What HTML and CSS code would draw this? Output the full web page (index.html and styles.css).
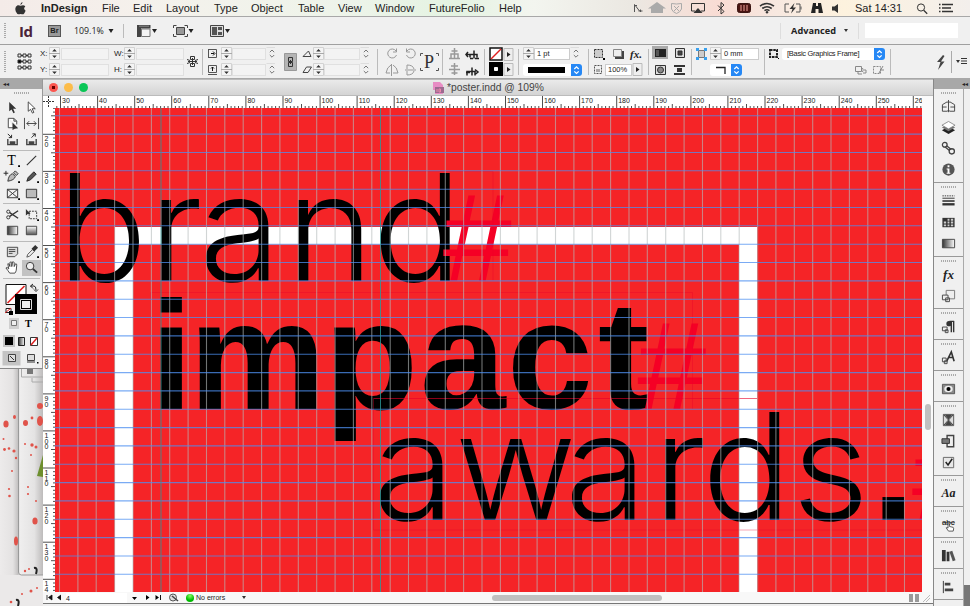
FILE: index.html
```html
<!DOCTYPE html>
<html lang="en">
<head>
  <meta charset="UTF-8">
  <title>poster.indd</title>
  <link rel="stylesheet" href="styles.css">
</head>
<body>

<svg class="sprites" width="0" height="0">
  <symbol id="stepper" viewBox="0 0 11 13"><path d="M.5.5h10v12H.5z" fill="#f4f4f4" stroke="#d2d2d2"/><path d="M0 6.5h11" stroke="#aaa"/><path d="M3.2 4.6 5.5 2l2.3 2.6zM3.2 8.4 5.5 11l2.3-2.6z" fill="#333"/></symbol>
  <symbol id="updown" viewBox="0 0 12 13"><path d="M.5.5H9q2.500 2.500 2.500V10q0 2.500-2.500 2.500H.5z" fill="#fafafa" stroke="#ddd"/><path d="M3.800 5.200 6 3l2.200 2.200M3.800 8 6 10.200 8.200 8" fill="none" stroke="#777"/></symbol>
  <symbol id="blue" viewBox="0 0 11 12"><path d="M0 0h8q3 0 3 3v6q0 3-3 3H0z" fill="#2688f5"/><path d="M3.300 5 5.500 2.800 7.700 5M3.300 7.300l2.200 2.200 2.200-2.200" fill="none" stroke="#fff" stroke-width="1.200"/></symbol>
  <symbol id="next" viewBox="0 0 10 13"><path d="M.5.5h9v12h-9z" fill="#eee" stroke="#bbb"/><path d="M3.500 4v5L7 6.500z" fill="#222"/></symbol>
</svg>

<nav class="menubar">
  <div class="menu-apple"><svg width="11" height="13" viewBox="0 0 11 13"><path d="M7.500 0Q7.600 2 5.500 2.900 5.300 1 7.500 0zM5.600 3.700Q9 2.300 10.300 4.500 7.800 6.500 10.600 8.700 9 13 7 12.200q-1.400-.6-2.600 0Q2.300 13 .8 9.500-.8 4.900 2.600 3.300q1.200-.3 3 .4z" fill="#333"/></svg></div>
  <div class="menu-item m-app">InDesign</div>
  <div class="menu-item m-file">File</div>
  <div class="menu-item m-edit">Edit</div>
  <div class="menu-item m-layout">Layout</div>
  <div class="menu-item m-type">Type</div>
  <div class="menu-item m-object">Object</div>
  <div class="menu-item m-table">Table</div>
  <div class="menu-item m-view">View</div>
  <div class="menu-item m-window">Window</div>
  <div class="menu-item m-folio">FutureFolio</div>
  <div class="menu-item m-help">Help</div>
  <div class="menu-status">
    <svg width="223" height="16" viewBox="630 0 223 16" fill="none" stroke="#333">
      <path d="M634.500 12V4.500l5 6.500M637 5.500h-2.500m6 4v2.500m-2-1h4" stroke="#555"/>
      <path d="m648 8.500 9-6.500 9 6.500h-3V13h-12V8.500z" fill="#aaa" stroke="none"/>
      <path d="M671.500 3.500q5 1 10 0V9q-1 3-5 4.500-4-1.500-5-4.500zM674 6l5 5m0-5-5 5" stroke="#aaa"/>
      <path d="M695 11h-3.500V3.500h13V11H701"/><path d="m693.500 13 4.500-5 4.500 5z" fill="#333" stroke="none"/>
      <path d="m718 5.500 6 6-3 2.500V2.500l3 2.500-6 6"/>
      <rect x="737.500" y="3.500" width="13" height="9" rx="2" fill="#4a1512" stroke="#3a1512"/><path d="M741 5v6m3-6v6m3-6v6" stroke="#f3a39a"/>
      <path d="M760 6.200q7-5.500 14 0M762.300 8.500q4.700-3.500 9.400 0M764.500 10.700q2.500-1.800 5 0" stroke-width="1.600"/><circle cx="767" cy="12.300" r="1.200" fill="#333" stroke="none"/>
      <path d="M789 4h-4v8h4m7-8h4v8h-4m5-5.500v3" stroke="#555"/><path d="m794.500 3-5 6h3l-1.500 4.500 5-6h-3z" fill="#333" stroke="none"/>
      <path d="M813 3h3v3h2V3h3l2 10h-4.500V9h-3v4H811z" fill="#222" stroke="none"/>
      <path d="M832 6.500h2.500L838 4v9l-3.500-2.500H832z" fill="#333" stroke="none"/>
    </svg>
    <span class="clock">Sat 14:31</span>
    <svg width="60" height="16" viewBox="910 0 60 16" fill="none" stroke="#333">
      <circle cx="921" cy="7.500" r="3.600"/><path d="m923.700 10.300 3.500 3.500" stroke-width="1.300"/>
      <path d="M942 4.500h11m-11 3.500h9m-9 3.500h11" stroke-width="1.500"/><path d="M939 4.500h1.500M939 8h1.500m-1.500 3.500h1.500" stroke-width="1.500"/>
    </svg>
  </div>
</nav>

<header class="appbar">
  <span class="grip"></span>
  <span class="id-logo">Id</span>
  <span class="bridge">Br</span>
  <span class="zoom-level">109.1%</span>
  <svg class="view-tools" width="130" height="20" viewBox="103 21 130 20">
    <path d="m108.500 29 2.500 4 2.500-4zM152 29l2.500 4 2.500-4zM188.500 29l2.500 4 2.500-4zM225 29l2.500 4 2.500-4z" fill="#222"/>
    <path d="M123.500 24v14" stroke="#bbb"/>
    <path d="M137 25h13.500v3.500H141V37h-4z" fill="#444"/><path d="M141.500 29h8.500v7.500h-8.500z" fill="#f4f4f4" stroke="#777"/><path d="M140 25.500v1.500m2-1.500v1.500m2-1.500v1.500m2-1.500v1.500m2-1.500v1.500" stroke="#ccc" stroke-width=".7"/>
    <path d="M176.500 27.500h8v7h-8z" fill="#999" stroke="#444"/><path d="M173.500 28v-2.500h3m8 0h3V28m0 6v2.500h-3m-8 0h-3V34" fill="none" stroke="#444"/>
    <path d="M210.500 25.500h13v11h-13z" fill="#ddd" stroke="#444"/><path d="M212 27h5v8h-5zm6 0h4v3h-4zm0 5h4v3h-4z" fill="#555"/>
  </svg>
  <div class="workspace-switch">Advanced <i class="caret"></i></div>
  <div class="search-field"></div>
</header>

<section class="controlbar">
  <div class="group g-ref">
    <span class="grip"></span>
    <svg width="16" height="17" viewBox="0 0 16 17" fill="none" stroke="#333"><path d="M3 2.500h9M3 8.500h9M3 14.500h9" /><path d="M1 1h3v3H1zm5 0h3v3H6zm5 0h3v3h-3zM6 7h3v3H6zm5 0h3v3h-3zM1 13h3v3H1zm5 0h3v3H6zm5 0h3v3h-3z" fill="#f0f0f0"/><path d="M1 7h3v3H1z" fill="#000"/></svg>
  </div>
  <div class="group g-pos">
    <div class="row"><b class="lbl">X:</b><svg class="st"><use href="#stepper"/></svg><i class="field"></i></div>
    <div class="row"><b class="lbl">Y:</b><svg class="st"><use href="#stepper"/></svg><i class="field"></i></div>
  </div>
  <div class="group g-size">
    <div class="row"><b class="lbl">W:</b><svg class="st"><use href="#stepper"/></svg><i class="field"></i></div>
    <div class="row"><b class="lbl">H:</b><svg class="st"><use href="#stepper"/></svg><i class="field"></i></div>
  </div>
  <div class="group g-chain">
    <svg width="11" height="13" viewBox="0 0 11 13" fill="none" stroke="#333"><path d="M3.500 1.500h4v3h-4zm0 7h4v3h-4zM5.500 3v7M0 4.500l3 1m8-1-3 1M0 8.500l3-1m8 1-3-1M1 6.500h9"/></svg>
  </div>
  <div class="group g-scale line">
    <div class="row"><svg class="ic" viewBox="0 0 11 13" fill="none" stroke="#555"><path d="M1.500 2v9m0-8.500h8v8h-8"/><path d="M4 6.500h3M6 4.500l2 2-2 2" stroke="#111"/></svg><svg class="st"><use href="#stepper"/></svg><i class="field"></i><svg class="ud"><use href="#updown"/></svg></div>
    <div class="row"><svg class="ic" viewBox="0 0 11 13" fill="none" stroke="#555"><path d="M1 11.500h9m-8.500-9h8v7h-8z"/><path d="M5.500 8V4M4 5.500 5.500 4 7 5.500" stroke="#111"/></svg><svg class="st"><use href="#stepper"/></svg><i class="field"></i><svg class="ud"><use href="#updown"/></svg></div>
  </div>
  <div class="group g-link">
    <svg width="13" height="18" viewBox="0 0 13 18"><path d="M.5.5h12v17H.5z" fill="#b4b4b4" stroke="#999"/><path d="M4.500 4.500h4v4h-4zm0 5h4v4h-4zM6.500 7v4" fill="none" stroke="#333"/></svg>
  </div>
  <div class="group g-angle">
    <div class="row"><svg class="ic" viewBox="0 0 11 13" fill="none" stroke="#444"><path d="M1 9.500h8L6.500 4z"/></svg><svg class="st"><use href="#stepper"/></svg><i class="field"></i><svg class="ud"><use href="#updown"/></svg></div>
    <div class="row"><svg class="ic" viewBox="0 0 11 13" fill="none" stroke="#444"><path d="M1 9.500h5L9.500 4h-5z"/></svg><svg class="st"><use href="#stepper"/></svg><i class="field"></i><svg class="ud"><use href="#updown"/></svg></div>
  </div>
  <div class="group g-rotate line">
    <svg width="34" height="30" viewBox="380 47 34 30" fill="none" stroke="#999"><path d="M394 51a4.500 4.500 0 1 0 .5 4M394.500 48.500V52H391M405 51a4.500 4.500 0 1 1-.5 4M404.500 48.500V52h3.500"/><path d="M389.500 64v12M388 73h-4q1-6 5-8m2 8h5q-1-6-5-8M403 70h12M405 65q6 0 7 4m-7 6q6 0 7-4M405 65v4m0 6v-4"/></svg>
    <svg width="22" height="22" viewBox="0 0 22 22"><path d="M1.500 5V2.500H4m13 0h2.500V5m0 12v2.500H17m-13 0H1.500V17" fill="none" stroke="#555"/><text x="5" y="17" class="flip-p">P</text></svg>
  </div>
  <div class="group g-select line">
    <svg width="35" height="30" viewBox="447 47 35 30" fill="none" stroke="#999"><path d="M454.500 48v11M449 58.500h11M451 58v-4h7v4M451.500 51h6M454.500 63v12M449 69.500h11M451 66h7M451.500 73h6" stroke-width="1.500"/><path d="M466 54.500h5m-3-2.500-2 2.500 2 2.500m6-6.500v8m-4 0h3m2 0h4m-9-1v-3h7v3M466 72.500h4m2-5v8m-5 0v-4h8v4m0-6 3 2.500-3 2.500" stroke="#222" stroke-width="1.500"/></svg>
  </div>
  <div class="group g-fill line">
    <div class="row"><svg width="14" height="14" viewBox="0 0 14 14"><path d="M1 1h12v12H1z" fill="#fff" stroke="#111" stroke-width="1.500"/><path d="M2 12 12 2" stroke="#e02020" stroke-width="1.500"/></svg><svg class="nx"><use href="#next"/></svg></div>
    <div class="row"><svg width="14" height="14" viewBox="0 0 14 14"><path d="M0 0h14v14H0z"/><path d="M5.500 5.500h3v3h-3z" fill="#fff" stroke="#fff"/></svg><svg class="nx"><use href="#next"/></svg></div>
  </div>
  <div class="group g-stroke line">
    <div class="row"><svg class="st"><use href="#stepper"/></svg><span class="field on">1 pt</span><svg class="ud"><use href="#updown"/></svg></div>
    <div class="row"><div class="stroke-style"><i></i><svg width="11" height="12"><use href="#blue"/></svg></div></div>
  </div>
  <div class="group g-effects line">
    <div class="row"><svg width="33" height="14" viewBox="0 0 33 14"><path d="M1.500 2.500h8v8h-8z" fill="#ccc" stroke="#333" stroke-dasharray="2 1"/><path d="M10 11h2v2h-2z"/><path d="M22 4h9v8h-9z" fill="#444"/><path d="M20.500 2.500h8v7h-8z" fill="#eee" stroke="#888"/></svg><em class="fx">fx.</em></div>
    <div class="row"><svg class="ic" viewBox="0 0 11 13" fill="none" stroke="#555"><path d="M1.500 2.500h7v8h-7z" stroke-dasharray="2 1"/><path d="M3 6h4v3H3z" fill="#aaa" stroke="none"/></svg><span class="field on pct">100%</span><svg class="nx"><use href="#next"/></svg></div>
  </div>
  <div class="group g-wrap line">
    <svg width="38" height="32" viewBox="651 46 38 32"><path d="M652 46h16v13h-16z" fill="#aaa"/><path d="M655 49h11v8h-11z" fill="#222"/><path d="M656 51h3m-3 2h3m-3 2h3" stroke="#888"/><g fill="#ddd" stroke="#333"><path d="M675.500 48.500h9v9h-9zM655.500 65.500h10v9h-10z"/><path d="M678 51h4v4h-4z" fill="#444"/><circle cx="660.500" cy="70" r="3" fill="#888"/></g><path d="M674 65h11v2h-11zm3 3h5v4h-5zm-3 5h11v2h-11z" fill="#333"/></svg>
  </div>
  <div class="group g-corner line">
    <div class="row"><svg class="ic" viewBox="0 0 11 13"><path d="M2.500 3.500h6v7h-6z" fill="#ccc" stroke="#777"/><path d="M0 1h3v3H0zm8 0h3v3H8zM0 10h3v3H0zm8 0h3v3H8z" fill="#38a0ee"/></svg><svg class="st"><use href="#stepper"/></svg><span class="field on">0 mm</span></div>
    <div class="row"><div class="corner-style"><svg width="21" height="12" viewBox="0 0 21 12"><path d="M6 3.500h9V10" fill="none" stroke="#222" stroke-width="1.300"/></svg><svg width="11" height="12"><use href="#blue"/></svg></div></div>
  </div>
  <div class="group g-style line">
    <div class="row"><svg class="ic" viewBox="0 0 11 13"><path d="M2 3h7v7H2z" fill="#eee" stroke="#222" stroke-width="2" stroke-dasharray="2.500 .8"/><path d="M10 11h1v1h-1z"/></svg><div class="style-select"><span>[Basic Graphics Frame]</span><svg width="11" height="12"><use href="#blue"/></svg></div></div>
    <div class="row row-end"><svg width="31" height="12" viewBox="0 0 31 12" fill="none" stroke="#888"><path d="M1.500 2.500h6v5h-6zM4 8v2h4m1-4h3v3H9m0-5L7.500 6 9 8"/><path d="M19.500 2.500h7v7h-7z" stroke-dasharray="2 1"/><path d="m25 9 4-7m-2 4h3"/></svg></div>
  </div>
  <div class="group g-end line">
    <svg width="36" height="22" viewBox="934 51 36 22"><path d="m943 55-6 7h3.500l-2.500 8 6.500-8.500H941l3.500-5.500z" fill="#444"/><path d="M951.500 51v22" stroke="#aaa"/><path d="m956 60 2 3 2-3z" fill="#333"/><path d="M961 58.500h6m-6 2.500h6m-6 2.500h6" stroke="#333"/></svg>
  </div>
</section>

<main class="workspace">

  <aside class="left">
    <div class="toolbox">
      <div class="panel-head head-left">◂◂</div>
      <div class="tool-grip"></div>
      <div class="tool-group">
        <svg viewBox="0 0 16 16"><path d="M4.500 2v10l2.500-2 2 4 1.500-.8L8.700 9.300H12z" fill="#333"/></svg>
        <svg viewBox="0 0 16 16"><path d="M4.500 2v10l2.500-2 2 4 1.500-.8L8.700 9.300H12z" fill="#fff" stroke="#333" stroke-width=".9"/></svg>
        <svg viewBox="0 0 16 16" fill="none" stroke="#444"><path d="M3.500 2.500h6l3 3V9m-4 3.500h-5v-10m6 0v3h3" fill="#fff"/><path d="m8 7 6 6-3.500.5L8 15z" fill="#333" stroke="none"/></svg>
        <svg viewBox="0 0 16 16" fill="none" stroke="#444"><path d="M.5 2v12m15-12v12M3 8h10M5.500 5.500 3 8l2.500 2.500m5-5L13 8l-2.500 2.500"/></svg>
        <svg viewBox="0 0 16 16" fill="none" stroke="#444"><path d="M3 7.500v6h10v-6M5 10.500h6M5 12h6" stroke-width="1.500"/><path d="m3 2 4 4m0-3v3H4" stroke="#222"/></svg>
        <svg viewBox="0 0 16 16" fill="none" stroke="#444"><path d="M3 7.500v6h10v-6M5 10.500h6M5 12h6" stroke-width="1.500"/><path d="m8 6 4-4m0 3V2H9" stroke="#222"/></svg>
      </div>
      <div class="tool-group">
        <svg viewBox="0 0 16 16"><text x="2.500" y="13" class="tool-t">T</text><path d="M14 13h2v2h-2z"/></svg>
        <svg viewBox="0 0 16 16"><path d="m3 13 10-10" stroke="#333" stroke-width="1.200"/></svg>
        <svg viewBox="0 0 16 16"><path d="M1 2v5m-2.500-2.500h5" stroke="#222"/><path d="M3 13q1-7 5-8l3 3q-1 4-8 5zm6-9 2-2 3 3-2 2z" fill="#bbb" stroke="#333"/><path d="M14 13h2v2h-2z"/></svg>
        <svg viewBox="0 0 16 16"><path d="m3 13 1.500-4 6-6 2.500 2.500-6 6z" fill="#555" stroke="#222"/><path d="M14 13h2v2h-2z"/></svg>
        <svg viewBox="0 0 16 16" fill="none" stroke="#333"><path d="M2.500 3.500h11v9h-11zl11 9m0-9-11 9"/><path d="M14 13h2v2h-2z" fill="#000" stroke="none"/></svg>
        <svg viewBox="0 0 16 16"><path d="M2.500 3.500h11v9h-11z" fill="#bbb" stroke="#333"/><path d="M14 13h2v2h-2z"/></svg>
      </div>
      <div class="tool-group">
        <svg viewBox="0 0 16 16" fill="none" stroke="#333"><path d="m14 4-9 6m9 2L5 6" stroke-width="1.400"/><circle cx="3.500" cy="5" r="1.700"/><circle cx="3.500" cy="11" r="1.700"/></svg>
        <svg viewBox="0 0 16 16"><path d="M2 2v7l2-1.500 3 0z" fill="#333"/><path d="M5.500 4.500h8v8h-8z" fill="none" stroke="#333" stroke-dasharray="2 1"/><path d="M14 13h2v2h-2z"/></svg>
        <svg viewBox="0 0 16 16"><defs><linearGradient id="g1"><stop stop-color="#333"/><stop offset="1" stop-color="#fff"/></linearGradient></defs><path d="M2.500 3.500h11v9h-11z" fill="url(#g1)" stroke="#444"/></svg>
        <svg viewBox="0 0 16 16"><defs><linearGradient id="g2" y2="1" x2="0"><stop stop-color="#fff"/><stop offset="1" stop-color="#555"/></linearGradient></defs><path d="M2.500 3.500h11v9h-11z" fill="url(#g2)" stroke="#444"/></svg>
      </div>
      <div class="tool-group">
        <svg viewBox="0 0 16 16" fill="none" stroke="#444"><path d="M2.500 3.500h11v7l-3 3h-8z" fill="#ddd"/><path d="M4 6h7M4 8h7m-7 2h4"/></svg>
        <svg viewBox="0 0 16 16"><path d="m3 14 1-3 5-5 2 2-5 5z" fill="#eee" stroke="#555"/><path d="m8 5 4-4 3 3-4 4z" fill="#333"/><path d="M14 13h2v2h-2z"/></svg>
        <svg viewBox="0 0 16 16"><path d="M5 14Q3 11 1 8.500q1-1.500 3 1L3 4q1.500-1 2.200 3V2.500q1.500-1 2 0V7l.8-5q1.500-.5 1.800 1v4l1.500-3q1.500 0 1.200 1.500L12 11q-.5 2-1.500 3z" fill="#fff" stroke="#333" stroke-width=".9"/></svg>
        <div class="tool-active"><svg viewBox="0 0 16 16"><circle cx="6.500" cy="6.500" r="4" fill="#eee" stroke="#333"/><path d="m9.500 9.500 4.500 4" stroke="#333" stroke-width="2"/></svg></div>
      </div>
      <svg class="swatches" width="42" height="87" viewBox="0 281 42 87">
        <path d="M6 284.500h20v20H6z" fill="#fff" stroke="#111"/><path d="m7.500 303 17-17" stroke="#e02020" stroke-width="1.600"/>
        <path d="M15 294h22v20H15z"/><path d="M20.500 299.500h11v10h-11z" fill="none" stroke="#ddd"/><path d="M22 301h8v7h-8z" fill="#eee"/>
        <path d="M30.500 286h3.500q2 0 2 4M33 284l-2.500 2 2.500 2.500m1 1 2 2 2-2" fill="none" stroke="#222"/>
        <path d="M6 308.500h5v4H6z" fill="#fff" stroke="#222"/><path d="M9 311h4v4H9z"/><path d="m5 313 6-5" stroke="#d22"/>
        <path d="M9 318h10v11H9z" fill="#d0d0d0"/><path d="M11.500 320.500h5v5h-5z" fill="#eee" stroke="#777"/>
        <path d="M3 335h12v12H3z" fill="#c4c4c4"/><path d="M5 337h8v8H5z"/>
        <path d="M18.500 337.500h6v8h-6z" fill="url(#g1)" stroke="#222"/><path d="M30.500 337.500h7v8h-7z" fill="#fff" stroke="#333"/><path d="m31 345 6-7" stroke="#d22" stroke-width="1.500"/>
        <path d="M2.500 351h18v14.500h-18z" fill="#c4c4c4"/><path d="M8.500 354.500h7v7h-7zM27.500 354.500h7v6h-7z" fill="#ddd" stroke="#444"/><path d="m10 356 4 4M27 362h8" stroke="#333"/><path d="M37 362h1.500v1.500H37z"/>
        <text x="25" y="327" class="swatch-t">T</text>
      </svg>
    </div>
    <svg class="desktop" width="43" height="237" viewBox="0 369 43 237">
      <defs><linearGradient id="shade"><stop stop-color="#edebeb"/><stop offset=".3" stop-color="#e4e2e2"/><stop offset=".42" stop-color="#c2c0c0"/><stop offset=".46" stop-color="#efeeee"/><stop offset=".8" stop-color="#e4e3e3"/><stop offset="1" stop-color="#bdbbbb"/></linearGradient></defs>
      <path d="M0 369h43v237H0z" fill="#ebe9e9"/>
      <path d="M0 369h43v206H0z" fill="url(#shade)"/>
      <path d="M18.500 369v203q0 3 3 3H43" fill="none" stroke="#999"/>
      <path d="M21.500 369v8H43M32 378v4h11" fill="none" stroke="#aaa"/>
      <path d="M27 369h6v5h-6z" fill="#777"/>
      <path d="M43 455v22l-6-1z" fill="#6d8f2e"/>
      <g fill="#e0534a"><ellipse cx="6" cy="424" rx="2.600" ry="3.500"/><ellipse cx="14.500" cy="417" rx="1.500" ry="2"/><ellipse cx="25.500" cy="423" rx="2.500" ry="3"/><ellipse cx="40" cy="421" rx="3" ry="5"/><ellipse cx="40" cy="406" rx="3" ry="3"/><circle cx="32" cy="418" r="1.400"/><circle cx="3.500" cy="439" r="1"/><circle cx="4.500" cy="449.500" r="1.400"/><circle cx="9" cy="448.500" r="1.300"/><circle cx="14" cy="451" r="1.600"/><circle cx="16" cy="458" r="1.200"/><circle cx="25" cy="444" r="1"/><circle cx="32" cy="445" r="1.700"/><circle cx="36" cy="447" r="1.500"/><circle cx="31" cy="455" r="1"/><circle cx="12" cy="471" r="1"/><circle cx="9" cy="489" r="1.100"/><circle cx="9.500" cy="496" r="1.300"/><circle cx="28" cy="487" r="1"/><circle cx="28" cy="494" r="1.100"/><circle cx="36" cy="501" r="1"/><ellipse cx="35" cy="521" rx="2.600" ry="3.600"/><ellipse cx="16" cy="541" rx="2" ry="4.500"/><circle cx="25" cy="571" r="1.200"/><circle cx="29" cy="569" r="1"/><circle cx="31" cy="591" r="1.500"/><circle cx="22" cy="594" r="1"/><circle cx="11" cy="602" r="1.300"/><circle cx="37" cy="588" r="1"/></g>
      <path d="M34 568q4-1 2 6M16 600q4-1 2 6" fill="none" stroke="#222" stroke-width="2"/>
    </svg>
  </aside>

  <section class="document">
    <div class="titlebar">
      <span class="dot close"></span><span class="dot mini"></span><span class="dot full"></span>
      <div class="doc-title">
        <svg width="12" height="12" viewBox="0 0 12 12"><path d="M1 0h7l3 3v9H3V8H1z" fill="#e88cc4"/><path d="M3 5h9v6H3z" fill="#9c6a90"/><path d="M5 7v3m2-3h1.500v3H7z" stroke="#e8a" fill="none"/></svg>
        *poster.indd @ 109%
      </div>
    </div>
    <div class="page-area">
      <svg class="corner" width="12" height="12" viewBox="0 0 12 12"><path d="M0 0h12v12H0z" fill="#fff"/><path d="M5.500 0v12M0 5.500h12" stroke="#333" stroke-dasharray="2 1"/></svg>
      <svg class="ruler-x" width="867" height="12" viewBox="55 96 867 12"></svg>
      <div class="scroll-y-top"></div>
      <svg class="ruler-y" width="12" height="484" viewBox="43 108 12 484"></svg>
      <svg class="artboard" width="867" height="484" viewBox="55 108 867 484">
        <path class="page" d="M55 108h867v484H55z"/>
        <path class="white-frame" d="M115 592V227h642v365h-18V244.500H133V592z"/>
        <g class="light">
          <text y="280.500" x="57.500 149 199 286 372.500">brand</text>
          <text y="519.500" x="373 455 565 653 702 792">awards</text>
        </g>
        <g class="heavy">
          <text y="409" x="150 189 324 420 507 598">impact</text>
          <text y="519.500" x="872">.</text>
        </g>
        <g class="end-mark">
          <text y="280.500" x="441">#</text>
          <text y="408.500" x="635.500">#</text>
          <text y="519.500" x="910">#</text>
        </g>
        <path class="text-frames" d="M55 171.500h438v109M150.500 409V292.500h542V409M373.500 530V398.500M373.500 530H922"/>
        <path class="text-frames strong" d="M373.500 398.500H757"/>
        <g class="grid-lines"></g>
        <path class="guides" d="M161 108v484M380.500 108v484"/>
      </svg>
      <div class="scroll-y"><i></i></div>
    </div>
    <div class="statusbar">
      <svg width="16" height="11" viewBox="0 0 16 11"><path d="M2 3v5M7 3v5L3.500 5.500zM16 3v5l-3.500-2.500z" fill="#111" stroke="#111" stroke-width=".8"/></svg>
      <span class="page-no">4</span>
      <svg class="pager" width="54" height="11" viewBox="127 593 54 11"><path d="m131 598 2.500 3 2.500-3zM145 596v5l3.500-2.500zM154.500 596v5l3.500-2.500z"/><path d="M159.500 596v5" stroke="#111"/><circle cx="172" cy="598.500" r="3.500" fill="#ddd" stroke="#555"/><path d="m171 597 6 5" stroke="#444" stroke-width="1.500"/></svg>
      <span class="ok"></span>
      <span class="preflight">No errors</span>
      <i class="caret"></i>
      <div class="scroll-x"><i></i></div>
      <svg class="split" width="23" height="11" viewBox="0 0 23 11"><path d="M1 2h4v8H1zm6 0h4v8H7z" fill="#999"/><path d="m15 10 7-7m-4 7 4-4" stroke="#bbb"/></svg>
    </div>
  </section>

  <aside class="dock">
    <div class="panel-head head-right">◂◂</div>
    <div class="dock-body">
      <div class="dock-icons">
        <div class="dock-section">
          <svg viewBox="0 0 16 16" fill="none" stroke="#444"><path d="M1.500 13V6l5-3 1.500 1 1.500-1 5 3v7h-5L8 12l-1.500 1zM8 1v13M1 8.500h5m4 0h5"/></svg>
          <svg viewBox="0 0 16 16"><path d="m1 11 7-4 7 4-7 4z" fill="#222"/><path d="m1 8 7-4 7 4-7 4z" fill="#777"/><path d="m1 5.500 7-4 7 4-7 4z" fill="#fff" stroke="#777" stroke-width=".8"/></svg>
          <svg viewBox="0 0 16 16" fill="none" stroke="#444" stroke-width="1.400"><circle cx="4" cy="4" r="2.500"/><circle cx="11.500" cy="11" r="2.800"/><path d="m6 5 5 4m-7-3 5 4"/></svg>
          <svg viewBox="0 0 16 16"><circle cx="8" cy="8" r="6.500" fill="#555"/><path d="M7 3.500h2v2H7zM6 7h3v4.500h1v1H6v-1h1V8H6z" fill="#fff"/></svg>
        </div>
        <div class="dock-section">
          <svg viewBox="0 0 16 16" stroke="#333"><path d="M1.500 3h13" stroke-dasharray="1.500 1"/><path d="M1.500 5.500h13"/><path d="M1.500 8.500h13" stroke-width="1.700"/><path d="M1.500 12h13" stroke-width="2.500"/></svg>
          <svg viewBox="0 0 16 16"><path d="M1.500 3h13v10h-13z" fill="#333"/><path d="M3 7h2.500v2H3zm4 0h2v2H7zm3.500 0H13v2h-2.500zM3 10h2.500v2H3zm4 0h2v2H7zm3.500 0H13v2h-2.500zM7 4h2v2H7zm3.500 0H13v2h-2.500z" fill="#ccc"/></svg>
          <svg viewBox="0 0 16 16"><path d="M1.500 3.500h13v9h-13z" fill="url(#g1)" stroke="#444"/></svg>
        </div>
        <div class="dock-section">
          <em class="dock-fx">fx</em>
          <svg viewBox="0 0 16 16" fill="#eee" stroke="#444"><path d="M5.500 2.500h9v9h-9z" stroke="#777"/><path d="M1.500 7.500h6v5h-6zM5 10.500h4v4H5z"/></svg>
        </div>
        <div class="dock-section">
          <svg viewBox="0 0 16 16"><path d="M13.500 2v12M11 2v12M14 2.500H9" stroke="#333" stroke-width="1.500"/><circle cx="8.500" cy="5" r="2.800" fill="#333"/><path d="M1.500 8.500h5v4h-5zm3 3h3v3h-3z" fill="#eee" stroke="#444"/></svg>
        </div>
        <div class="dock-section">
          <svg viewBox="0 0 16 16"><path d="m6 12 5-10 3 10M8 8h5" fill="none" stroke="#333" stroke-width="1.700"/><path d="M1.500 8.500h4v4h-4zm2 3h3v3h-3z" fill="#eee" stroke="#444"/></svg>
        </div>
        <div class="dock-section">
          <svg viewBox="0 0 16 16"><path d="M1.500 3.500h13v10h-13z" fill="#888" stroke="#555"/><ellipse cx="8" cy="8.500" rx="4.500" ry="3.500" fill="#eee"/><circle cx="8" cy="8.500" r="2.200"/></svg>
        </div>
        <div class="dock-section">
          <svg viewBox="0 0 16 16"><path d="M2.500 2.500h11v12h-11z" fill="#ddd" stroke="#555"/><path d="m3 3 10 11M13 3 3 14" stroke="#333"/><path d="m4 14 4-5 4 5zm0-11h8L8 8z" fill="#444"/></svg>
          <svg viewBox="0 0 16 16"><path d="M6.500 1.500h7v12h-7z" fill="#eee" stroke="#444" stroke-width="1.500"/><path d="M1 5h8v5H1z" fill="#777" stroke="#333"/></svg>
          <svg viewBox="0 0 16 16" fill="none" stroke="#666"><path d="M2.500 2.500h11v11h-11z" fill="#e8e8e8"/><path d="m5 7.500 2.500 3L12 4" stroke="#222" stroke-width="1.600"/></svg>
        </div>
        <div class="dock-section"><em class="dock-aa">Aa</em></div>
        <div class="dock-section">
          <svg viewBox="0 0 16 16"><text x="1" y="8" class="dock-abc">abc</text><path d="M1 6h14" stroke="#333" stroke-width=".8"/><path d="M8 15 5.500 11.500q1-1 2 .3V7.500q1-.8 1.500 0V10l4 1q1 1 0 4z" fill="#fff" stroke="#333" stroke-width=".8"/></svg>
        </div>
        <div class="dock-section">
          <svg viewBox="0 0 16 16"><path d="M1 2h4v12H1zm5 2h3v10H6z" fill="#333"/><path d="m9 4 3-1 3.500 10-3 1z" fill="#555"/></svg>
        </div>
        <div class="dock-section">
          <svg viewBox="0 0 16 16"><path d="M2.500 2v13" stroke="#333"/><path d="M4 4h6v3H4zm0 6h9v3H4z" fill="#444"/></svg>
        </div>
      </div>
      <div class="dock-edge"></div>
    </div>
  </aside>

</main>

<script>
  const NS = 'http://www.w3.org/2000/svg';

  function add(parent, name, attrs, text) {
    const el = document.createElementNS(NS, name);
    for (const key in attrs) el.setAttribute(key, attrs[key]);
    if (text) el.textContent = text;
    parent.appendChild(el);
  }

  // 10 mm = 37.08 px at this zoom
  const unit = 37.08;
  const rulerX = document.querySelector('.ruler-x');
  const rulerY = document.querySelector('.ruler-y');
  const grid = document.querySelector('.grid-lines');

  let dx = '';
  for (let i = -1; i < 240; i++) {
    const x = 60.5 + i * unit / 10;
    const h = i % 10 === 0 ? 12 : (i % 5 === 0 ? 4 : 2);
    dx += `M${x.toFixed(1)} 108v-${h}`;
    if (i % 10 === 0) add(rulerX, 'text', {x: x + 1.5, y: 103}, String(30 + i));
  }
  add(rulerX, 'path', {d: dx});

  let dy = '';
  for (let i = -7; i < 125; i++) {
    const y = 134.3 + i * unit / 10;
    const w = i % 10 === 0 ? 12 : (i % 5 === 0 ? 4 : 2);
    dy += `M55 ${y.toFixed(1)}h-${w}`;
    if (i % 10 === 0) {
      String(20 + i).split('').forEach((digit, n) => {
        add(rulerY, 'text', {x: 44.5, y: y + 7 + n * 5.7}, digit);
      });
    }
  }
  add(rulerY, 'path', {d: dy});

  let cols = '';
  for (let i = 0; i < 47; i++) {
    cols += `M${(59.5 + i * 18.37).toFixed(1)} 108v484`;
  }
  let rows = '';
  for (let i = 0; i < 26; i++) {
    rows += `M55 ${(115.8 + i * 18.34).toFixed(1)}h867`;
  }
  add(grid, 'path', {d: cols, class: 'cols'});
  add(grid, 'path', {d: rows, class: 'rows'});
</script>
</body>
</html>
```

FILE: styles.css
```css
* {
  box-sizing: border-box;
}

body {
  margin: 0;
  width: 970px;
  height: 606px;
  overflow: hidden;
  background: #efefef;
  font-family: "Liberation Sans", Arial, sans-serif;
  color: #222;
}

svg {
  display: block;
  flex: none;
}

.sprites {
  position: absolute;
}

/* menu bar */
.menubar {
  display: flex;
  align-items: center;
  height: 17px;
  padding-left: 15px;
  border-bottom: 1px solid #a8a8a8;
  background: linear-gradient(90deg, #f4ebe8, #f5f1ec 15%, #eef4ea 35%, #e4f3e2 47%, #f3f5ef 55%, #ebe8e2 65%, #f9dcd4 74%, #f7e8e0 80%, #fdf2de 87%, #f3efec);
  font-size: 11px;
}

.menu-apple { width: 26px; }
.menu-item { flex: none; }
.m-app { width: 61px; font-weight: bold; }
.m-file { width: 31px; }
.m-edit { width: 33px; }
.m-layout { width: 48px; }
.m-type { width: 37px; }
.m-object { width: 47px; }
.m-table { width: 40px; }
.m-view { width: 37px; }
.m-window { width: 54px; }
.m-folio { width: 70px; }
.m-help { width: 30px; }

.menu-status {
  display: flex;
  align-items: center;
  margin-left: auto;
}

.clock {
  width: 57px;
  padding-left: 2px;
  white-space: nowrap;
}

/* application bar */
.appbar {
  display: flex;
  align-items: center;
  height: 28px;
  padding-left: 4px;
  border-bottom: 1px solid #a0a0a0;
  background: #f0f0f0;
}

.grip {
  width: 2px;
  height: 15px;
  background: repeating-linear-gradient(#aaa 0 1px, #eee 1px 2px);
}

.id-logo {
  width: 29px;
  margin-left: 13px;
  font: bold 15px "Open Sans", sans-serif;
  letter-spacing: -.5px;
  color: #4b2238;
}

.bridge {
  width: 13px;
  height: 12px;
  border: 1px solid #555;
  background: #999;
  font: bold 7.500px/10px "Liberation Sans", sans-serif;
  text-align: center;
}

.zoom-level {
  width: 29px;
  margin: 0 0 0 13px;
  font: 8.800px "Open Sans", sans-serif;
}

.workspace-switch {
  display: flex;
  align-items: center;
  gap: 8px;
  height: 16px;
  margin-left: auto;
  padding: 0 10px;
  border: solid #ddd;
  border-width: 0 1px;
  font: bold 9.200px "Open Sans", sans-serif;
}

.caret {
  border: 2px solid transparent;
  border-top: 3px solid #333;
  border-bottom: 0;
}

.search-field {
  width: 93px;
  height: 15px;
  margin: 0 12px 0 6px;
  background: #fff;
}

/* control bar */
.controlbar {
  display: flex;
  height: 34px;
  border-bottom: 1px solid #a8a8a8;
  background: #f0f0f0;
  font-size: 8px;
}

.group {
  display: flex;
  flex: none;
  flex-direction: column;
  justify-content: center;
  gap: 3px;
}

.line {
  background: linear-gradient(#bbb, #bbb) 0 50% / 1px 26px no-repeat;
}

.row {
  display: flex;
  align-items: center;
  height: 13px;
}

.row-end { justify-content: flex-end; }
.lbl { width: 9px; font: 8px "Liberation Sans", sans-serif; }
.st { width: 11px; height: 13px; }
.ud { width: 12px; height: 13px; }
.nx { width: 11px; height: 13px; }
.ic { width: 11px; height: 13px; margin-right: 3px; }

.field {
  height: 12px;
  border: 1px solid #e0e0e0;
  background: #f3f3f3;
  line-height: 10px;
}

.field.on {
  padding-left: 2px;
  border-color: #ccc;
  background: #fff;
  font-size: 7.500px;
}

.g-ref {
  flex-direction: row;
  align-items: center;
  justify-content: flex-start;
  width: 40px;
  padding-left: 4px;
  gap: 11px;
}

.g-ref .grip { height: 22px; }
.g-pos { width: 74px; }
.g-pos .field, .g-size .field { width: 48px; margin-left: 1px; }
.g-size { width: 73px; }
.g-size .lbl { width: 10px; }
.g-chain { width: 15px; }
.g-scale { width: 82px; padding-left: 5px; }
.g-scale .field { width: 34px; }
.g-link { width: 18px; }
.g-angle { width: 75px; }
.g-angle .ic { margin-right: 0; }
.g-angle .field { width: 36px; }
.g-rotate { flex-direction: row; align-items: center; width: 65px; padding-left: 3px; }
.flip-p { font: 18px "Liberation Serif", serif; fill: #333; }
.g-select { width: 42px; padding-left: 5px; }
.g-fill { width: 34px; padding-left: 5px; gap: 2px; }
.g-stroke { width: 70px; padding-left: 5px; }
.g-stroke .field { width: 36px; }

.stroke-style {
  display: flex;
  align-items: center;
  justify-content: space-between;
  width: 59px;
  height: 12px;
  padding-left: 5px;
  border-radius: 3px;
  background: #fff;
}

.stroke-style i { width: 37px; height: 6px; background: #000; }
.g-effects { width: 60px; padding-left: 5px; }
.g-effects .ic { margin-right: 1px; }
.fx { margin-left: 4px; font: italic bold 11px "Liberation Serif", serif; }
.pct { width: 27px; }
.g-wrap { width: 43px; padding-left: 3px; }
.g-corner { width: 73px; padding-left: 5px; }
.g-corner .field { width: 38px; }

.corner-style {
  display: flex;
  width: 32px;
  margin-left: 14px;
  border-radius: 3px;
  background: #fff;
}

.g-style { width: 126px; padding: 0 5px 0 4px; }

.style-select {
  display: flex;
  justify-content: space-between;
  width: 103px;
  height: 12px;
  padding-left: 5px;
  border-radius: 3px;
  background: #fff;
  font-size: 7.500px;
  letter-spacing: -.28px;
  line-height: 12px;
  white-space: nowrap;
}

.g-end { width: 80px; padding-left: 44px; }

/* workspace */
.workspace {
  display: flex;
  height: 527px;
}

.left {
  width: 43px;
}

.toolbox {
  width: 43px;
  height: 290px;
  border-right: 1px solid #999;
  border-bottom: 1px solid #888;
  background: #f0f0f0;
}

.panel-head {
  height: 10px;
  background: #a8a8a8;
  font: 6px/10px "DejaVu Sans", sans-serif;
}

.head-left { padding-left: 3px; }
.head-right { padding-right: 2px; text-align: right; }

.tool-grip {
  width: 15px;
  height: 2px;
  margin: 3px auto 5px 14px;
  background: repeating-linear-gradient(90deg, #aaa 0 1px, #eee 1px 2px);
}

.tool-group {
  display: grid;
  grid-template-columns: 19px 19px;
  grid-auto-rows: 16.200px;
  align-items: center;
  justify-items: center;
  margin-left: 3px;
  padding-bottom: 2px;
  margin-bottom: 2px;
  border-bottom: 1px solid #bbb;
  width: 37px;
}

.tool-group svg { width: 15px; height: 15px; overflow: visible; }
.tool-t { font: 15px "Liberation Serif", serif; }

.tool-active {
  display: flex;
  align-items: center;
  justify-content: center;
  width: 19px;
  height: 16px;
  background: #c2c2c2;
}

.swatch-t { font: bold 10px "Liberation Serif", serif; }

/* document window */
.document {
  width: 890px;
  border-top: 1px solid #bbb;
}

.titlebar {
  display: flex;
  align-items: center;
  height: 16px;
  padding-left: 6px;
  gap: 6px;
  border-bottom: 1px solid #bbb;
  background: linear-gradient(#eaeaea, #d4d4d4);
}

.dot { width: 9px; height: 9px; border-radius: 50%; }
.close { background: radial-gradient(#600 0 1.500px, #fb5750 2px); }
.mini { background: #fcbc49; }
.full { background: #0ac656; }

.doc-title {
  display: flex;
  align-items: center;
  gap: 3px;
  margin-left: 338px;
  font-size: 10.300px;
  color: #444;
  white-space: nowrap;
}

.page-area {
  display: grid;
  grid-template-columns: 12px 867px 11px;
  grid-template-rows: 12px 484px;
}

.ruler-x, .ruler-y { background: #fff; }
.ruler-x text, .ruler-y text { font-size: 7px; fill: #222; }
.ruler-x path, .ruler-y path { stroke: #222; stroke-width: .8; }

.page { fill: #f52427; }
.white-frame { fill: #fff; }
.light text { font-family: Inter, sans-serif; font-weight: 300; font-size: 149px; }
.heavy text { font-family: "Liberation Sans", sans-serif; font-weight: bold; font-size: 154px; }
.end-mark text { font-family: "Liberation Sans", sans-serif; font-style: italic; font-size: 124px; fill: #f50025; }
.text-frames { fill: none; stroke: #e8002a; stroke-opacity: .35; }
.strong { stroke-opacity: .6; }
.cols { stroke: #b4bcbc; stroke-opacity: .62; stroke-width: 1.100; }
.rows { stroke: #4c8ff0; stroke-opacity: .75; stroke-width: 1.100; }
.guides { stroke: #2a9a9a; stroke-opacity: .8; }

.scroll-y-top { background: #fafafa; }

.scroll-y {
  padding: 296px 0 0 3px;
  background: #fafafa;
}

.scroll-y i {
  display: block;
  width: 6px;
  height: 26px;
  border-radius: 3px;
  background: #c0c0c0;
}

.statusbar {
  display: flex;
  align-items: center;
  height: 12px;
  padding-left: 2px;
  border-bottom: 1px solid #777;
  background: #f8f8f8;
  font-size: 7px;
}

.page-no {
  width: 61px;
  height: 10px;
  margin: 0 1px 0 5px;
  background: #fff;
  line-height: 11px;
}

.ok {
  width: 8px;
  height: 8px;
  margin: 0 2px 0 4px;
  border-radius: 50%;
  background: radial-gradient(circle at 50% 25%, #8f6, #0b0 60%);
}

.preflight { width: 46px; }

.scroll-x {
  width: 411px;
  margin-left: 246px;
  flex: none;
}

.scroll-x i {
  display: block;
  width: 170px;
  height: 6px;
  border-radius: 3px;
  background: #c0c0c0;
}

.split { margin-left: 5px; }

/* dock */
.dock {
  width: 37px;
  border-left: 1px solid #888;
}

.dock-body {
  display: flex;
  height: 517px;
}

.dock-icons {
  width: 30px;
  border-right: 1px solid #aaa;
  background: #f0f0f0;
  overflow: hidden;
}

.dock-section {
  display: flex;
  flex-direction: column;
  align-items: center;
  padding: 7px 0 2.050px;
  border-bottom: 1px solid #999;
  background: repeating-linear-gradient(90deg, #aaa 0 1px, #eee 1px 2px) 50% 3px / 15px 2px no-repeat;
}

.dock-section > * {
  width: 15px;
  height: 21.100px;
}

.dock-section > em {
  width: 24px;
  text-align: center;
}

.dock-fx { font: italic bold 13px/21px "Liberation Serif", serif; }
.dock-aa { font: italic bold 12px/21px "Liberation Serif", serif; }
.dock-abc { font: 8.500px "Liberation Sans", sans-serif; }

.dock-edge {
  width: 6px;
  background: linear-gradient(#f0f0f0 0 496px, #777 496px);
}
```
